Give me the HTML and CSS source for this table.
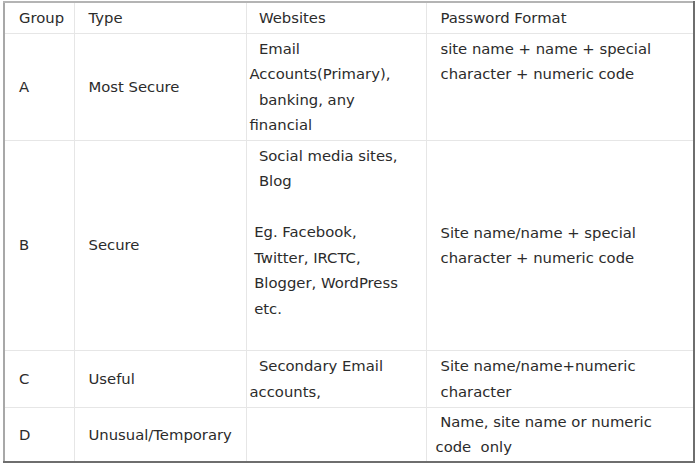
FILE: index.html
```html
<!DOCTYPE html>
<html>
<head>
<meta charset="utf-8">
<link rel="stylesheet" href="styles.css">
</head>
<body>
<table class="grid">
  <colgroup>
    <col class="c-group">
    <col class="c-type">
    <col class="c-sites">
    <col class="c-format">
  </colgroup>
  <tr class="r-head">
    <td class="col-group">Group</td>
    <td class="col-type">Type</td>
    <td class="col-sites">&nbsp;&nbsp;Websites</td>
    <td class="col-format">Password Format</td>
  </tr>
  <tr class="r-a">
    <td class="col-group">A</td>
    <td class="col-type">Most Secure</td>
    <td class="col-sites">&nbsp;&nbsp;Email<br>Accounts(Primary),<br>&nbsp;&nbsp;banking, any<br>financial</td>
    <td class="col-format top">site name + name + special<br>character + numeric code</td>
  </tr>
  <tr class="r-b">
    <td class="col-group">B</td>
    <td class="col-type">Secure</td>
    <td class="col-sites top">&nbsp;&nbsp;Social media sites,<br>&nbsp;&nbsp;Blog<br><br>&nbsp;Eg. Facebook,<br>&nbsp;Twitter, IRCTC,<br>&nbsp;Blogger, WordPress<br>&nbsp;etc.</td>
    <td class="col-format">Site name/name + special<br>character + numeric code</td>
  </tr>
  <tr class="r-c">
    <td class="col-group">C</td>
    <td class="col-type">Useful</td>
    <td class="col-sites">&nbsp;&nbsp;Secondary Email<br>accounts,</td>
    <td class="col-format">Site name/name+numeric<br>character</td>
  </tr>
  <tr class="r-d">
    <td class="col-group">D</td>
    <td class="col-type">Unusual/Temporary</td>
    <td class="col-sites"></td>
    <td class="col-format narrow">&nbsp;Name, site name or numeric<br>code&nbsp; only</td>
  </tr>
</table>
</body>
</html>
```

FILE: styles.css
```css
html, body {
  margin: 0;
  padding: 0;
  background: #ffffff;
}

body {
  padding: 1px 0 0 3px;
}

.grid {
  border-collapse: collapse;
  table-layout: fixed;
  width: 690px;
  font-family: "DejaVu Sans", Verdana, sans-serif;
  font-size: 14.8px;
  line-height: 25.5px;
  color: #2b2b2b;
  border-top: 2px solid #b4b4b4;
  border-left: 2px solid #a8a8a8;
  border-right: 2px solid #6e6e6e;
  border-bottom: 2px solid #6e6e6e;
}

.c-group { width: 70px; }
.c-type { width: 172px; }
.c-sites { width: 180px; }
.c-format { width: 268px; }

.grid td {
  border: 1px solid #e6e6e6;
  padding: 0;
  vertical-align: middle;
  white-space: nowrap;
}

.grid td.top {
  vertical-align: top;
  padding-top: 2px;
}

.r-head { height: 31px; }
.r-a { height: 107px; }
.r-b { height: 210px; }
.r-c { height: 57px; }
.r-d { height: 55px; }

.col-group { padding-left: 14px !important; }
.col-type { padding-left: 14px !important; }
.col-sites { padding-left: 3px !important; }
.col-format { padding-left: 14px !important; }
.col-format.narrow { padding-left: 9px !important; }
```
